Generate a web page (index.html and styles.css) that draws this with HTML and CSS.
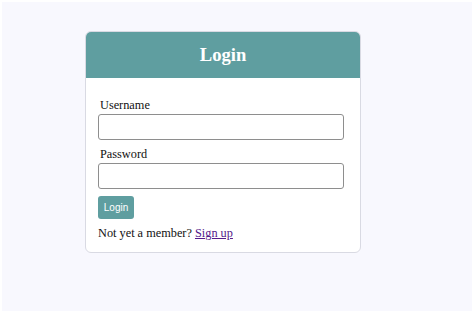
FILE: index.html
```html
<!DOCTYPE html>
<html lang="en">
<head>
<meta charset="utf-8">
<title>Login</title>
<link rel="stylesheet" href="styles.css">
</head>
<body>
<div class="page">
  <div class="card">
    <div class="card-header"><h2 class="title">Login</h2></div>
    <form class="card-body">
      <label class="label" for="username">Username</label>
      <input class="field" id="username" type="text">
      <label class="label" for="password">Password</label>
      <input class="field" id="password" type="password">
      <button class="btn" type="button">Login</button>
      <p class="note">Not yet a member? <a class="link" href="#">Sign up</a></p>
    </form>
  </div>
</div>
</body>
</html>
```

FILE: styles.css
```css
html, body {
  margin: 0;
  padding: 0;
  background: #ffffff;
}
body {
  width: 474px;
  height: 313px;
  overflow: hidden;
  font-family: "Liberation Serif", "Times New Roman", serif;
  color: #111;
}
.page {
  margin: 2px;
  height: 309px;
  width: 470px;
  box-sizing: border-box;
  background: #f8f8fe;
  padding: 29px 0 0 83px;
}
.card {
  width: 276px;
  box-sizing: border-box;
  background: #ffffff;
  border: 1px solid #d9dae3;
  border-radius: 6px;
  overflow: hidden;
}
.card-header {
  background: #5f9ea0;
  height: 47px;
  margin: -1px -1px 0;
  display: flex;
  align-items: center;
  justify-content: center;
}
.title {
  margin: 0;
  color: #ffffff;
  font-size: 18.6px;
  font-weight: bold;
  line-height: 1;
  padding-top: 1px;
}
.card-body {
  display: flex;
  flex-direction: column;
  align-items: flex-start;
  padding: 20px 15px 12px 12px;
}
.label {
  font-size: 12.3px;
  line-height: 14px;
  margin: 0 0 2px 2px;
}
.field {
  width: 246px;
  height: 26px;
  box-sizing: border-box;
  border: 1px solid #8e8e8e;
  border-radius: 3px;
  margin: 0 0 7px 0;
  background: #fff;
}
.btn {
  background: #5f9ea0;
  color: #ffffff;
  border: none;
  border-radius: 3px;
  font-family: "Liberation Sans", Arial, sans-serif;
  font-size: 10px;
  width: 36px;
  height: 23px;
  padding: 0;
  margin: 0 0 7px 0;
}
.note {
  margin: 0;
  font-size: 12.3px;
  line-height: 14px;
}
.link {
  color: #551a8b;
  text-decoration: underline;
}
```
